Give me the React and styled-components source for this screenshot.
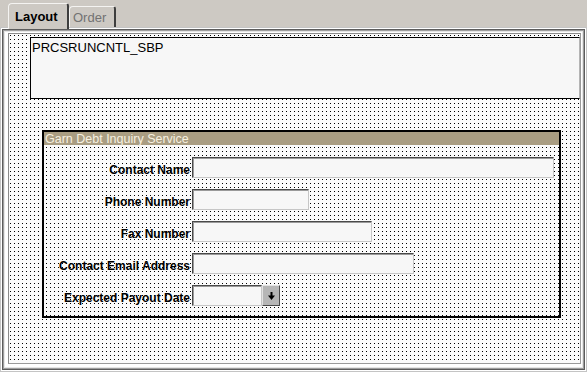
import React from "react";
import styled, { createGlobalStyle } from "styled-components";

const Global = createGlobalStyle`
  html, body { margin: 0; padding: 0; }
  body {
    background: #cdc9c3;
    font-family: "Liberation Sans", Arial, sans-serif;
    width: 587px;
    height: 372px;
    overflow: hidden;
  }
  * { box-sizing: border-box; }
`;

const Page = styled.div`
  width: 587px;
  height: 372px;
  display: flex;
  flex-direction: column;
`;

const TabBar = styled.div`
  height: 27px;
  padding-left: 8px;
  display: flex;
  align-items: flex-end;
  flex-shrink: 0;
`;

const Tab = styled.div`
  position: relative;
  z-index: ${(p) => (p.$active ? 2 : 1)};
  height: ${(p) => (p.$active ? "26px" : "21px")};
  width: ${(p) => (p.$active ? "61px" : "47px")};
  margin-bottom: ${(p) => (p.$active ? "-2px" : "0")};
  background: #cdc9c3;
  border-top: 1px solid #f4f3f1;
  border-left: 1px solid #f4f3f1;
  border-right: 2px solid #3e3e3e;
  border-top-left-radius: 4px;
  border-top-right-radius: 3px;
  padding-left: ${(p) => (p.$active ? "6px" : "3px")};
  padding-top: ${(p) => (p.$active ? "5px" : "3px")};
  font-size: 13px;
  line-height: 15px;
  font-weight: ${(p) => (p.$active ? 700 : 400)};
  color: ${(p) => (p.$active ? "#000" : "#727272")};
`;

const Frame = styled.div`
  flex: 1;
  display: flex;
  padding: 6px 6px 8px 8px;
  background: #ffffff;
  box-shadow:
    inset 0 0 0 1px #c4c4c4,
    inset 0 0 0 2px #ffffff,
    inset 0 0 0 3px #5c5c5c,
    inset 0 0 0 4px #9e9e9e,
    inset 0 0 0 5px #e6e6e6,
    inset 0 0 0 6px #ffffff;
`;

const Canvas = styled.div`
  flex: 1;
  display: flex;
  flex-direction: column;
  align-items: flex-start;
  border-left: 1px solid #8a8a8a;
  border-top: 1px solid #8a8a8a;
  border-right: 1px solid #9a9a9a;
  border-bottom: 1px solid #9a9a9a;
  background-color: #000;
  background-image:
    linear-gradient(to right, transparent 1px, #fbfbfb 1px),
    linear-gradient(to bottom, transparent 1px, #fbfbfb 1px);
  background-size: 4px 4px;
  background-position: 1px 1px;
`;

const RunBox = styled.div`
  margin: 3px 0 0 21px;
  align-self: stretch;
  height: 62px;
  background: #f7f7f7;
  border-top: 1px solid #000;
  border-left: 1px solid #000;
  border-bottom: 1px solid #000;
  border-right: 1px solid #b4b4b4;
  padding: 2px 0 0 1px;
  font-size: 13px;
  line-height: 15px;
  color: #000;
`;

const Group = styled.div`
  margin: 31px 0 0 33px;
  width: 519px;
  height: 188px;
  border: 2px solid #000;
  display: flex;
  flex-direction: column;
`;

const GroupHeader = styled.div`
  height: 13px;
  background: #a99d82;
  color: #f7f1e0;
  font-size: 12.5px;
  line-height: 13px;
  padding-left: 1px;
  padding-top: 1px;
  white-space: nowrap;
  overflow: visible;
`;

const Fields = styled.div`
  padding-top: 12px;
  display: grid;
  grid-template-columns: 146px auto;
  column-gap: 2px;
  row-gap: 11px;
  justify-items: start;
`;

const Label = styled.div`
  justify-self: end;
  height: 21px;
  line-height: 26px;
  font-size: 12px;
  font-weight: 700;
  color: #000;
  white-space: nowrap;
`;

const Input = styled.div`
  width: ${(p) => p.$w}px;
  height: 21px;
  background: #f7f7f7;
  border-top: 1px solid #4a4a4a;
  border-left: 1px solid #4a4a4a;
  border-right: 1px solid #c6c6c6;
  border-bottom: 1px solid #c6c6c6;
  box-shadow: inset 1px 1px 0 #9a9a9a;
`;

const DateWrap = styled.div`
  display: flex;
`;

const DropButton = styled.div`
  width: 18px;
  height: 21px;
  background: #b6b6b6;
  border-top: 1px solid #e2e2e2;
  border-left: 1px solid #e2e2e2;
  border-right: 1px solid #4a4a4a;
  border-bottom: 1px solid #4a4a4a;
  display: flex;
  align-items: center;
  justify-content: center;
`;

const DownArrow = () => (
  <svg width="7" height="8" viewBox="0 0 7 8">
    <rect x="2.5" y="0" width="2" height="4" fill="#000" />
    <polygon points="0,3.5 7,3.5 3.5,8" fill="#000" />
  </svg>
);

const fields = [
  { label: "Contact Name", w: 362 },
  { label: "Phone Number", w: 117 },
  { label: "Fax Number", w: 180 },
  { label: "Contact Email Address", w: 222 },
];

export default function App() {
  return (
    <>
      <Global />
      <Page>
        <TabBar>
          <Tab $active>Layout</Tab>
          <Tab>Order</Tab>
        </TabBar>
        <Frame>
          <Canvas>
            <RunBox>PRCSRUNCNTL_SBP</RunBox>
            <Group>
              <GroupHeader>Garn Debt Inquiry Service</GroupHeader>
              <Fields>
                {fields.map((f) => (
                  <React.Fragment key={f.label}>
                    <Label>{f.label}</Label>
                    <Input $w={f.w} />
                  </React.Fragment>
                ))}
                <Label>Expected Payout Date</Label>
                <DateWrap>
                  <Input $w={70} />
                  <DropButton>
                    <DownArrow />
                  </DropButton>
                </DateWrap>
              </Fields>
            </Group>
          </Canvas>
        </Frame>
      </Page>
    </>
  );
}
